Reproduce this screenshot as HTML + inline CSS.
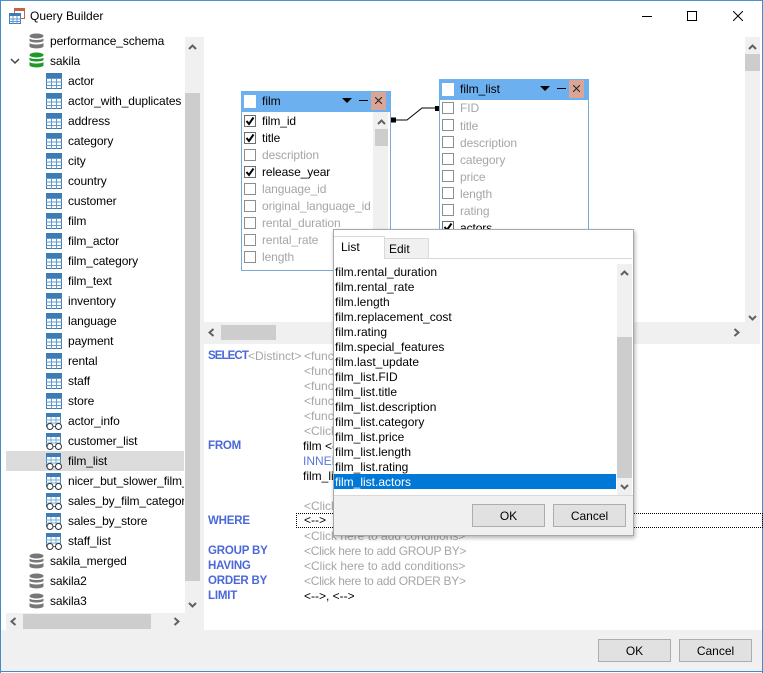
<!DOCTYPE html>
<html><head><meta charset="utf-8"><style>
html,body{margin:0;padding:0;width:763px;height:673px;overflow:hidden;background:#fff}
body{position:relative;font:12px/15px "Liberation Sans",sans-serif;color:#000}
.a,.t,svg.i,svg.c{position:absolute}
.t{white-space:nowrap;height:15px;line-height:15px}
svg.i + .t,svg.c + .t{letter-spacing:-.1px}
.g{color:#a6a6a6}.b{color:#4a68d8;font-weight:bold;font-size:11.5px;letter-spacing:-.2px}
.sql{color:#a6a6a6;left:304px}
.cap{letter-spacing:-.3px}
svg.i{width:17px;height:17px;left:46px}
svg.db{left:29px}
svg.c{width:12px;height:12px}
.btn{position:absolute;width:71px;height:21px;background:#e1e1e1;border:1px solid #adadad;text-align:center;line-height:22px}
</style></head><body>
<svg width="0" height="0" style="position:absolute"><defs>
<symbol id="tb" viewBox="0 0 17 17"><rect x=".5" y=".5" width="15" height="15" fill="#fff" stroke="#3d7cb4"/><rect x="0" y="0" width="16" height="5" fill="#3d7cb4"/><path d="M0 5.500H16M0 9H16M0 12.500H16M5.500 5V16M10.500 5V16" stroke="#5f9bcf" stroke-width="1"/></symbol>
<symbol id="vw" viewBox="0 0 17 17"><rect x=".5" y=".5" width="14" height="13" fill="#fff" stroke="#3d7cb4"/><rect x="0" y="0" width="15" height="4" fill="#3d7cb4"/><path d="M0 7H15M0 10H15M5 4V14M10 4V14" stroke="#7aaed8"/><circle cx="4" cy="13.500" r="3" fill="#fff" stroke="#333"/><circle cx="12.500" cy="13.500" r="3" fill="#fff" stroke="#333"/></symbol>
<symbol id="dg" viewBox="0 0 15 17"><ellipse cx="7.500" cy="3" rx="7" ry="2.500" fill="#777"/><path d="M.5 5.500C2 7.500 13 7.500 14.500 5.500V8C13 10 2 10 .5 8Z" fill="#777"/><path d="M.5 10C2 12 13 12 14.500 10V13.500C13 16 2 16 .5 13.500Z" fill="#777"/></symbol>
<symbol id="dn" viewBox="0 0 15 17"><ellipse cx="7.500" cy="3" rx="7" ry="2.500" fill="#1f9a2a"/><path d="M.5 5.500C2 7.500 13 7.500 14.500 5.500V8C13 10 2 10 .5 8Z" fill="#1f9a2a"/><path d="M.5 10C2 12 13 12 14.500 10V13.500C13 16 2 16 .5 13.500Z" fill="#1f9a2a"/></symbol>
<symbol id="cb" viewBox="0 0 12 12"><rect x=".5" y=".5" width="11" height="11" fill="#fff" stroke="#8e8e8e"/></symbol>
<symbol id="ck" viewBox="0 0 12 12"><rect x=".5" y=".5" width="11" height="11" fill="#fff" stroke="#6e6e6e"/><path d="M2.500 6L5 9L9.500 2.500" fill="none" stroke="#000" stroke-width="2"/></symbol>
<symbol id="up" viewBox="0 0 9 6"><path d="M1 5L4.500 1.500L8 5" fill="none" stroke="#606060" stroke-width="2"/></symbol>
<symbol id="dw" viewBox="0 0 9 6"><path d="M1 1L4.500 4.500L8 1" fill="none" stroke="#606060" stroke-width="2"/></symbol>
</defs></svg>

<!-- window frame -->
<div class="a" style="left:0;top:0;width:763px;height:1px;background:#4a94d0"></div>
<div class="a" style="left:0;top:0;width:1px;height:673px;background:#3f8ccb"></div>
<div class="a" style="left:762px;top:0;width:1px;height:673px;background:#3f8ccb"></div>
<div class="a" style="left:0;top:671px;width:763px;height:1px;background:#3f8ccb"></div>

<!-- title -->
<svg class="a" style="left:8px;top:8px" width="18" height="17" viewBox="0 0 18 17"><rect x="6.500" y=".5" width="10" height="10" fill="#fff" stroke="#c8604a"/><rect x="6" y="0" width="11" height="3" fill="#c8604a"/><rect x="1.500" y="5.500" width="11" height="10" fill="#fff" stroke="#3d7cb4"/><rect x="1" y="5" width="12" height="3" fill="#3d7cb4"/><path d="M1 11H13M1 13.500H13M5 8V16M9 8V16" stroke="#5f9bcf"/></svg>
<div class="t" style="left:30px;top:9px">Query Builder</div>
<div class="a" style="left:642px;top:16px;width:10px;height:1px;background:#000"></div>
<div class="a" style="left:687px;top:11px;width:8px;height:8px;border:1px solid #000"></div>
<svg class="a" style="left:733px;top:11px" width="10" height="10"><path d="M0 0L10 10M10 0L0 10" stroke="#000"/></svg>

<!-- footer -->
<div class="a" style="left:1px;top:630px;width:761px;height:41px;background:#f0f0f0"></div>
<div class="btn" style="left:598px;top:639px">OK</div>
<div class="btn" style="left:679px;top:639px">Cancel</div>

<!-- tree -->
<div class="a" style="left:6px;top:451px;width:178px;height:20px;background:#dcdcdc"></div>
<svg class="i db" style="top:33px;width:15px" ><use href="#dg"/></svg><div class="t" style="left:50px;top:34px">performance_schema</div>
<svg class="a" style="left:10px;top:58px" width="10" height="7"><path d="M1 1L5 5L9 1" fill="none" stroke="#444" stroke-width="1.500"/></svg>
<svg class="i db" style="top:52px;width:15px"><use href="#dn"/></svg><div class="t" style="left:50px;top:54px">sakila</div>
<svg class="i" style="top:73px"><use href="#tb"/></svg><div class="t" style="left:68px;top:74px">actor</div>
<svg class="i" style="top:93px"><use href="#tb"/></svg><div class="t" style="left:68px;top:94px">actor_with_duplicates</div>
<svg class="i" style="top:113px"><use href="#tb"/></svg><div class="t" style="left:68px;top:114px">address</div>
<svg class="i" style="top:133px"><use href="#tb"/></svg><div class="t" style="left:68px;top:134px">category</div>
<svg class="i" style="top:153px"><use href="#tb"/></svg><div class="t" style="left:68px;top:154px">city</div>
<svg class="i" style="top:173px"><use href="#tb"/></svg><div class="t" style="left:68px;top:174px">country</div>
<svg class="i" style="top:193px"><use href="#tb"/></svg><div class="t" style="left:68px;top:194px">customer</div>
<svg class="i" style="top:213px"><use href="#tb"/></svg><div class="t" style="left:68px;top:214px">film</div>
<svg class="i" style="top:233px"><use href="#tb"/></svg><div class="t" style="left:68px;top:234px">film_actor</div>
<svg class="i" style="top:253px"><use href="#tb"/></svg><div class="t" style="left:68px;top:254px">film_category</div>
<svg class="i" style="top:273px"><use href="#tb"/></svg><div class="t" style="left:68px;top:274px">film_text</div>
<svg class="i" style="top:293px"><use href="#tb"/></svg><div class="t" style="left:68px;top:294px">inventory</div>
<svg class="i" style="top:313px"><use href="#tb"/></svg><div class="t" style="left:68px;top:314px">language</div>
<svg class="i" style="top:333px"><use href="#tb"/></svg><div class="t" style="left:68px;top:334px">payment</div>
<svg class="i" style="top:353px"><use href="#tb"/></svg><div class="t" style="left:68px;top:354px">rental</div>
<svg class="i" style="top:373px"><use href="#tb"/></svg><div class="t" style="left:68px;top:374px">staff</div>
<svg class="i" style="top:393px"><use href="#tb"/></svg><div class="t" style="left:68px;top:394px">store</div>
<svg class="i" style="top:413px"><use href="#vw"/></svg><div class="t" style="left:68px;top:414px">actor_info</div>
<svg class="i" style="top:433px"><use href="#vw"/></svg><div class="t" style="left:68px;top:434px">customer_list</div>
<svg class="i" style="top:453px"><use href="#vw"/></svg><div class="t" style="left:68px;top:454px">film_list</div>
<svg class="i" style="top:473px"><use href="#vw"/></svg><div class="t" style="left:68px;top:474px;width:116px;overflow:hidden">nicer_but_slower_film_list</div>
<svg class="i" style="top:493px"><use href="#vw"/></svg><div class="t" style="left:68px;top:494px;width:116px;overflow:hidden">sales_by_film_category</div>
<svg class="i" style="top:513px"><use href="#vw"/></svg><div class="t" style="left:68px;top:514px">sales_by_store</div>
<svg class="i" style="top:533px"><use href="#vw"/></svg><div class="t" style="left:68px;top:534px">staff_list</div>
<svg class="i db" style="top:553px;width:15px"><use href="#dg"/></svg><div class="t" style="left:50px;top:554px">sakila_merged</div>
<svg class="i db" style="top:573px;width:15px"><use href="#dg"/></svg><div class="t" style="left:50px;top:574px">sakila2</div>
<svg class="i db" style="top:593px;width:15px"><use href="#dg"/></svg><div class="t" style="left:50px;top:594px">sakila3</div>

<!-- tree scrollbars -->
<div class="a" style="left:185px;top:37px;width:15px;height:576px;background:#f0f0f0"></div>
<div class="a" style="left:185px;top:93px;width:15px;height:488px;background:#cdcdcd"></div>
<svg class="a" style="left:188px;top:44px" width="9" height="6"><use href="#up"/></svg>
<svg class="a" style="left:188px;top:602px" width="9" height="6"><use href="#dw"/></svg>
<div class="a" style="left:6px;top:613px;width:198px;height:17px;background:#f0f0f0"></div>
<div class="a" style="left:23px;top:614px;width:128px;height:15px;background:#cdcdcd"></div>
<svg class="a" style="left:10px;top:617px" width="7" height="9"><path d="M5.500 1L1.500 4.500L5.500 8" fill="none" stroke="#606060" stroke-width="2"/></svg>
<svg class="a" style="left:173px;top:617px" width="7" height="9"><path d="M1.500 1L5.500 4.500L1.500 8" fill="none" stroke="#606060" stroke-width="2"/></svg>
<div class="a" style="left:200px;top:37px;width:4px;height:593px;background:#f0f0f0"></div>

<!-- canvas scrollbars -->
<div class="a" style="left:745px;top:37px;width:15px;height:288px;background:#f0f0f0"></div>
<div class="a" style="left:745px;top:54px;width:15px;height:17px;background:#cdcdcd"></div>
<svg class="a" style="left:748px;top:44px" width="9" height="6"><use href="#up"/></svg>
<svg class="a" style="left:748px;top:315px" width="9" height="6"><use href="#dw"/></svg>
<div class="a" style="left:204px;top:322px;width:556px;height:22px;background:#f0f0f0"></div>
<div class="a" style="left:221px;top:325px;width:55px;height:15px;background:#cdcdcd"></div>
<svg class="a" style="left:208px;top:328px" width="7" height="9"><path d="M5.500 1L1.500 4.500L5.500 8" fill="none" stroke="#606060" stroke-width="2"/></svg>
<svg class="a" style="left:733px;top:328px" width="7" height="9"><path d="M1.500 1L5.500 4.500L1.500 8" fill="none" stroke="#606060" stroke-width="2"/></svg>

<!-- film table -->
<div class="a" style="left:241px;top:91px;width:148px;height:178px;border:1px solid #7aa9d6;background:#fff"></div>
<div class="a" style="left:241px;top:91px;width:150px;height:21px;background:#6cb0f0"></div>
<div class="a" style="left:244px;top:95px;width:12px;height:13px;background:#fff"></div>
<div class="t" style="left:262px;top:94px">film</div>
<svg class="a" style="left:342px;top:98px" width="10" height="6"><path d="M0 0H10L5 5Z" fill="#000"/></svg>
<div class="a" style="left:359px;top:100px;width:9px;height:1px;background:#000"></div>
<div class="a" style="left:371px;top:92px;width:15px;height:18px;background:#d8a596"></div>
<svg class="a" style="left:375px;top:97px" width="7" height="7"><path d="M0 0L7 7M7 0L0 7" stroke="#222"/></svg>
<div class="a" style="left:373px;top:112px;width:15px;height:157px;background:#f0f0f0"></div>
<div class="a" style="left:375px;top:129px;width:13px;height:17px;background:#cdcdcd"></div>
<svg class="a" style="left:377px;top:119px" width="9" height="6"><use href="#up"/></svg>
<svg class="c" style="left:244px;top:115px"><use href="#ck"/></svg><div class="t" style="left:262px;top:114px">film_id</div>
<svg class="c" style="left:244px;top:132px"><use href="#ck"/></svg><div class="t" style="left:262px;top:131px">title</div>
<svg class="c" style="left:244px;top:149px"><use href="#cb"/></svg><div class="t g" style="left:262px;top:148px">description</div>
<svg class="c" style="left:244px;top:166px"><use href="#ck"/></svg><div class="t" style="left:262px;top:165px">release_year</div>
<svg class="c" style="left:244px;top:183px"><use href="#cb"/></svg><div class="t g" style="left:262px;top:182px">language_id</div>
<svg class="c" style="left:244px;top:200px"><use href="#cb"/></svg><div class="t g" style="left:262px;top:199px">original_language_id</div>
<svg class="c" style="left:244px;top:217px"><use href="#cb"/></svg><div class="t g" style="left:262px;top:216px">rental_duration</div>
<svg class="c" style="left:244px;top:234px"><use href="#cb"/></svg><div class="t g" style="left:262px;top:233px">rental_rate</div>
<svg class="c" style="left:244px;top:251px"><use href="#cb"/></svg><div class="t g" style="left:262px;top:250px">length</div>

<!-- connector -->
<svg class="a" style="left:390px;top:100px" width="52" height="26"><path d="M2 20H17L32 8H47" fill="none" stroke="#000"/><rect x="1" y="17.500" width="5" height="5" fill="#000"/><rect x="45" y="6" width="4" height="5" fill="#000"/></svg>

<!-- film_list table -->
<div class="a" style="left:439px;top:79px;width:148px;height:160px;border:1px solid #7aa9d6;background:#fff"></div>
<div class="a" style="left:439px;top:79px;width:150px;height:21px;background:#6cb0f0"></div>
<div class="a" style="left:442px;top:83px;width:12px;height:13px;background:#fff"></div>
<div class="t" style="left:460px;top:82px">film_list</div>
<svg class="a" style="left:540px;top:86px" width="10" height="6"><path d="M0 0H10L5 5Z" fill="#000"/></svg>
<div class="a" style="left:557px;top:88px;width:9px;height:1px;background:#000"></div>
<div class="a" style="left:569px;top:80px;width:15px;height:18px;background:#d8a596"></div>
<svg class="a" style="left:573px;top:85px" width="7" height="7"><path d="M0 0L7 7M7 0L0 7" stroke="#222"/></svg>
<svg class="c" style="left:442px;top:102px"><use href="#cb"/></svg><div class="t g" style="left:460px;top:101px">FID</div>
<svg class="c" style="left:442px;top:119px"><use href="#cb"/></svg><div class="t g" style="left:460px;top:119px">title</div>
<svg class="c" style="left:442px;top:136px"><use href="#cb"/></svg><div class="t g" style="left:460px;top:136px">description</div>
<svg class="c" style="left:442px;top:153px"><use href="#cb"/></svg><div class="t g" style="left:460px;top:153px">category</div>
<svg class="c" style="left:442px;top:170px"><use href="#cb"/></svg><div class="t g" style="left:460px;top:170px">price</div>
<svg class="c" style="left:442px;top:187px"><use href="#cb"/></svg><div class="t g" style="left:460px;top:187px">length</div>
<svg class="c" style="left:442px;top:204px"><use href="#cb"/></svg><div class="t g" style="left:460px;top:204px">rating</div>
<svg class="c" style="left:442px;top:221px"><use href="#ck"/></svg><div class="t" style="left:460px;top:221px">actors</div>

<!-- SQL -->
<div class="t b" style="left:208px;top:349px;letter-spacing:-.9px">SELECT</div>
<div class="t g" style="left:248px;top:349px">&lt;Distinct&gt;</div>
<div class="t sql" style="top:349px">&lt;function&gt;</div>
<div class="t sql" style="top:364px">&lt;function&gt;</div>
<div class="t sql" style="top:379px">&lt;function&gt;</div>
<div class="t sql" style="top:394px">&lt;function&gt;</div>
<div class="t sql" style="top:409px">&lt;function&gt;</div>
<div class="t sql" style="top:424px">&lt;Click here</div>
<div class="t b" style="left:208px;top:439px">FROM</div>
<div class="t" style="left:303px;top:439px">film &lt;--&gt;</div>
<div class="t" style="left:303px;top:454px;color:#5a78d8">INNER JOIN</div>
<div class="t" style="left:303px;top:469px">film_list</div>
<div class="t sql" style="top:499px">&lt;Click here</div>
<div class="t b" style="left:208px;top:514px">WHERE</div>
<div class="a" style="left:296px;top:513px;width:465px;height:13px;border:1px dotted #000"></div>
<div class="t" style="left:304px;top:513px">&lt;--&gt;</div>
<div class="t sql" style="top:529px">&lt;Click here to add conditions&gt;</div>
<div class="t b" style="left:208px;top:544px">GROUP BY</div>
<div class="t sql cap" style="top:544px">&lt;Click here to add GROUP BY&gt;</div>
<div class="t b" style="left:208px;top:559px">HAVING</div>
<div class="t sql" style="top:559px">&lt;Click here to add conditions&gt;</div>
<div class="t b" style="left:208px;top:574px">ORDER BY</div>
<div class="t sql cap" style="top:574px">&lt;Click here to add ORDER BY&gt;</div>
<div class="t b" style="left:208px;top:589px">LIMIT</div>
<div class="t" style="left:304px;top:589px">&lt;--&gt;, &lt;--&gt;</div>

<!-- dialog -->
<div class="a" style="left:333px;top:229px;width:299px;height:305px;background:#fff;border:1px solid #a8a8a8;box-shadow:1px 2px 4px rgba(0,0,0,.3)"></div>
<div class="a" style="left:384px;top:238px;width:44px;height:20px;background:#f0f0f0;border:1px solid #d9d9d9;border-bottom:0;border-left:0"></div>
<div class="a" style="left:384px;top:258px;width:248px;height:1px;background:#d9d9d9"></div>
<div class="a" style="left:384px;top:236px;width:1px;height:23px;background:#d9d9d9"></div>
<div class="a" style="left:334px;top:236px;width:50px;height:1px;background:#d9d9d9"></div>
<div class="t" style="left:341px;top:240px">List</div>
<div class="t" style="left:389px;top:242px">Edit</div>
<div class="t" style="left:335px;top:265px">film.rental_duration</div>
<div class="t" style="left:335px;top:280px">film.rental_rate</div>
<div class="t" style="left:335px;top:295px">film.length</div>
<div class="t" style="left:335px;top:310px">film.replacement_cost</div>
<div class="t" style="left:335px;top:325px">film.rating</div>
<div class="t" style="left:335px;top:340px">film.special_features</div>
<div class="t" style="left:335px;top:355px">film.last_update</div>
<div class="t" style="left:335px;top:370px">film_list.FID</div>
<div class="t" style="left:335px;top:385px">film_list.title</div>
<div class="t" style="left:335px;top:400px">film_list.description</div>
<div class="t" style="left:335px;top:415px">film_list.category</div>
<div class="t" style="left:335px;top:430px">film_list.price</div>
<div class="t" style="left:335px;top:445px">film_list.length</div>
<div class="t" style="left:335px;top:460px">film_list.rating</div>
<div class="a" style="left:334px;top:474px;width:282px;height:15px;background:#0078d7"></div>
<div class="t" style="left:335px;top:475px;color:#fff">film_list.actors</div>
<div class="a" style="left:617px;top:264px;width:15px;height:231px;background:#f0f0f0"></div>
<div class="a" style="left:617px;top:337px;width:15px;height:141px;background:#cdcdcd"></div>
<svg class="a" style="left:620px;top:270px" width="9" height="6"><use href="#up"/></svg>
<svg class="a" style="left:620px;top:484px" width="9" height="6"><use href="#dw"/></svg>
<div class="a" style="left:334px;top:495px;width:299px;height:40px;background:#f0f0f0;border-top:1px solid #d9d9d9;box-sizing:border-box"></div>
<div class="btn" style="left:472px;top:504px">OK</div>
<div class="btn" style="left:553px;top:504px">Cancel</div>
</body></html>
